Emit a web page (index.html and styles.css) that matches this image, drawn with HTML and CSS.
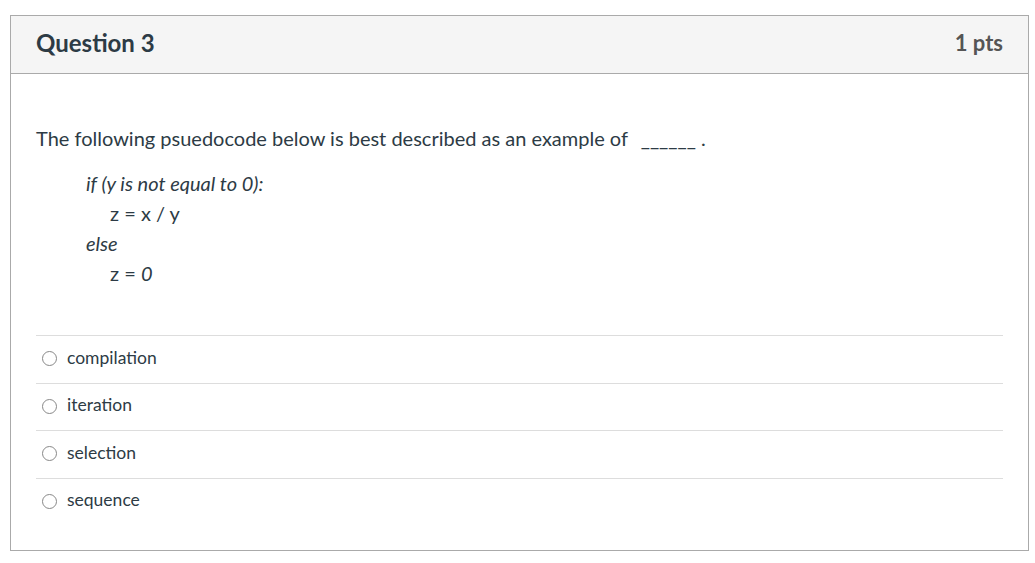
FILE: index.html
```html
<!DOCTYPE html>
<html lang="en">
<head>
    <meta charset="UTF-8">
    <title>Question 3</title>
    <link rel="stylesheet" href="styles.css">
</head>
<body>
    <div class="question">
        <header class="q-header">
            <span class="q-title">Question 3</span>
            <span class="q-points">1 pts</span>
        </header>
        <div class="q-body">
            <p class="q-text">The following psuedocode below is best described as an example of <span class="blank">______</span> .</p>
            <div class="code">
                <div class="line"><em>if (y is not equal to 0):</em></div>
                <div class="line indent">z = x / y</div>
                <div class="line"><em>else</em></div>
                <div class="line indent">z = <em>0</em></div>
            </div>
            <div class="answers">
                <label class="answer"><input type="radio" name="q3"><span>compilation</span></label>
                <label class="answer"><input type="radio" name="q3"><span>iteration</span></label>
                <label class="answer"><input type="radio" name="q3"><span>selection</span></label>
                <label class="answer"><input type="radio" name="q3"><span>sequence</span></label>
            </div>
        </div>
    </div>
</body>
</html>
```
FILE: styles.css
```css
*{
    margin: 0;
    padding: 0;
    box-sizing: border-box;
}
body{
    background-color: #fff;
    font-family: Lato, "Open Sans", sans-serif;
    color: #2d3b45;
    padding: 15px 7px 0 10px;
}
.question{
    border: 1px solid #aaa;
    width: 1019px;
    height: 536px;
}
.q-header{
    display: flex;
    justify-content: space-between;
    align-items: center;
    height: 58px;
    padding: 0 25px 4px 25px;
    background-color: #f5f5f5;
    border-bottom: 1px solid #aaa;
}
.q-title{
    font-size: 24px;
    font-weight: bold;
}
.q-points{
    font-size: 22px;
    font-weight: bold;
    color: #555;
}
.q-body{
    padding: 49px 25px 0 25px;
}
.q-text{
    font-size: 20px;
    line-height: 30px;
}
.blank{
    margin-left: 8px;
}
.code{
    margin: 15px 0 0 50px;
    font-size: 20px;
    line-height: 30px;
}
.indent{
    padding-left: 24px;
}
.answers{
    margin-top: 47px;
}
.answer{
    display: flex;
    align-items: center;
    height: 47.5px;
    border-top: 1px solid #ddd;
    padding: 0 0 4px 6px;
    font-size: 17.5px;
}
.answer input{
    appearance: none;
    width: 15px;
    height: 15px;
    border: 1px solid #888;
    border-radius: 50%;
    margin: 3px 10px 0 0;
}
```
